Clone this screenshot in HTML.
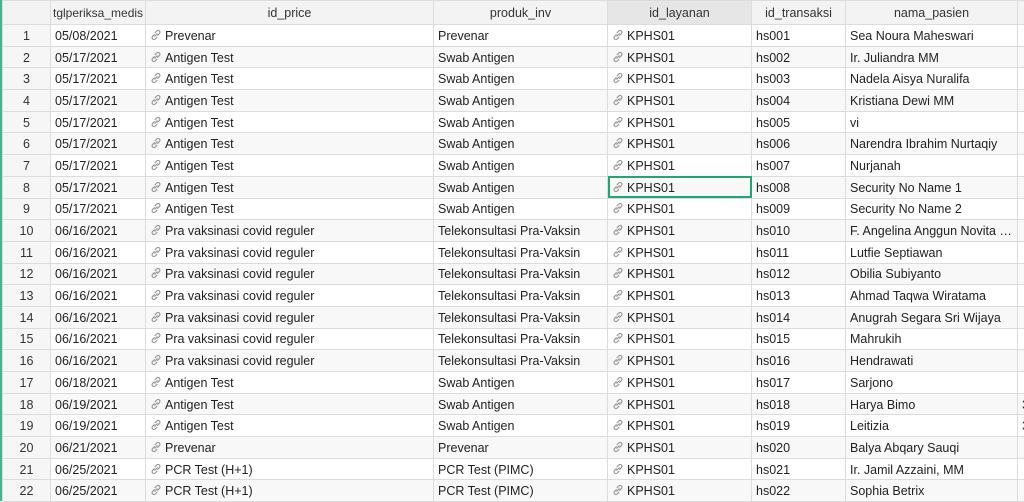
<!DOCTYPE html><html><head><style>
*{margin:0;padding:0;box-sizing:border-box}
body{width:1024px;height:501px;overflow:hidden;background:#fff;font-family:"Liberation Sans",Arial,sans-serif;font-size:12.5px;color:#222;position:relative}
.bar{position:absolute;left:0;top:0;width:2px;height:501px;background:#2fbf8f}
table{position:absolute;left:2px;top:0;border-collapse:collapse;table-layout:fixed;width:1035px}
td,th{border:1px solid #dcdcdc;height:21.7px;padding:1px 4px 0;white-space:nowrap;overflow:hidden;font-weight:normal}
th{height:24px;background:#f3f3f3;color:#333;text-align:center;font-size:12.5px}
th.s{background:#e6e6e6}
td.n{text-align:center;background:#f6f6f6;color:#333}
td.n.s{background:#e6e6e6}
tr.g td{background:#f8f8f8}
tr.g td.n{background:#f6f6f6}
td.sel{outline:2px solid #1fa672;outline-offset:-2px}
svg{width:12px;height:12px;vertical-align:-1px;margin-right:3px}
</style></head><body><div class="bar"></div>
<svg style="display:none"><defs><symbol id="l" viewBox="0 0 12 12"><path d="M4.8 7.2l2.4-2.4M4.3 5.7L2.6 7.4a1.8 1.8 0 0 0 2.6 2.6L6.9 8.3M7.7 6.3l1.7-1.7a1.8 1.8 0 0 0-2.6-2.6L5.1 3.7" fill="none" stroke="#999" stroke-width="1.2" stroke-linecap="round"/></symbol></defs></svg>
<table>
<colgroup><col style="width:48px"><col style="width:95px"><col style="width:288px"><col style="width:174px"><col style="width:144px"><col style="width:94px"><col style="width:172px"><col style="width:20px"></colgroup>
<tr><th></th><th style="text-align:left;padding:0 2px;font-size:12px">tglperiksa_medis</th><th>id_price</th><th>produk_inv</th><th class="s">id_layanan</th><th>id_transaksi</th><th>nama_pasien</th><th></th></tr>
<tr><td class="n">1</td><td>05/08/2021</td><td><svg><use href="#l"/></svg>Prevenar</td><td>Prevenar</td><td><svg><use href="#l"/></svg>KPHS01</td><td>hs001</td><td>Sea Noura Maheswari</td><td></td></tr>
<tr class="g"><td class="n">2</td><td>05/17/2021</td><td><svg><use href="#l"/></svg>Antigen Test</td><td>Swab Antigen</td><td><svg><use href="#l"/></svg>KPHS01</td><td>hs002</td><td>Ir. Juliandra MM</td><td></td></tr>
<tr><td class="n">3</td><td>05/17/2021</td><td><svg><use href="#l"/></svg>Antigen Test</td><td>Swab Antigen</td><td><svg><use href="#l"/></svg>KPHS01</td><td>hs003</td><td>Nadela Aisya Nuralifa</td><td></td></tr>
<tr class="g"><td class="n">4</td><td>05/17/2021</td><td><svg><use href="#l"/></svg>Antigen Test</td><td>Swab Antigen</td><td><svg><use href="#l"/></svg>KPHS01</td><td>hs004</td><td>Kristiana Dewi MM</td><td></td></tr>
<tr><td class="n">5</td><td>05/17/2021</td><td><svg><use href="#l"/></svg>Antigen Test</td><td>Swab Antigen</td><td><svg><use href="#l"/></svg>KPHS01</td><td>hs005</td><td>vi</td><td></td></tr>
<tr class="g"><td class="n">6</td><td>05/17/2021</td><td><svg><use href="#l"/></svg>Antigen Test</td><td>Swab Antigen</td><td><svg><use href="#l"/></svg>KPHS01</td><td>hs006</td><td>Narendra Ibrahim Nurtaqiy</td><td></td></tr>
<tr><td class="n">7</td><td>05/17/2021</td><td><svg><use href="#l"/></svg>Antigen Test</td><td>Swab Antigen</td><td><svg><use href="#l"/></svg>KPHS01</td><td>hs007</td><td>Nurjanah</td><td></td></tr>
<tr class="g"><td class="n s">8</td><td>05/17/2021</td><td><svg><use href="#l"/></svg>Antigen Test</td><td>Swab Antigen</td><td class="sel"><svg><use href="#l"/></svg>KPHS01</td><td>hs008</td><td>Security No Name 1</td><td></td></tr>
<tr><td class="n">9</td><td>05/17/2021</td><td><svg><use href="#l"/></svg>Antigen Test</td><td>Swab Antigen</td><td><svg><use href="#l"/></svg>KPHS01</td><td>hs009</td><td>Security No Name 2</td><td></td></tr>
<tr class="g"><td class="n">10</td><td>06/16/2021</td><td><svg><use href="#l"/></svg>Pra vaksinasi covid reguler</td><td>Telekonsultasi Pra-Vaksin</td><td><svg><use href="#l"/></svg>KPHS01</td><td>hs010</td><td>F. Angelina Anggun Novita …</td><td></td></tr>
<tr><td class="n">11</td><td>06/16/2021</td><td><svg><use href="#l"/></svg>Pra vaksinasi covid reguler</td><td>Telekonsultasi Pra-Vaksin</td><td><svg><use href="#l"/></svg>KPHS01</td><td>hs011</td><td>Lutfie Septiawan</td><td></td></tr>
<tr class="g"><td class="n">12</td><td>06/16/2021</td><td><svg><use href="#l"/></svg>Pra vaksinasi covid reguler</td><td>Telekonsultasi Pra-Vaksin</td><td><svg><use href="#l"/></svg>KPHS01</td><td>hs012</td><td>Obilia Subiyanto</td><td></td></tr>
<tr><td class="n">13</td><td>06/16/2021</td><td><svg><use href="#l"/></svg>Pra vaksinasi covid reguler</td><td>Telekonsultasi Pra-Vaksin</td><td><svg><use href="#l"/></svg>KPHS01</td><td>hs013</td><td>Ahmad Taqwa Wiratama</td><td></td></tr>
<tr class="g"><td class="n">14</td><td>06/16/2021</td><td><svg><use href="#l"/></svg>Pra vaksinasi covid reguler</td><td>Telekonsultasi Pra-Vaksin</td><td><svg><use href="#l"/></svg>KPHS01</td><td>hs014</td><td>Anugrah Segara Sri Wijaya</td><td></td></tr>
<tr><td class="n">15</td><td>06/16/2021</td><td><svg><use href="#l"/></svg>Pra vaksinasi covid reguler</td><td>Telekonsultasi Pra-Vaksin</td><td><svg><use href="#l"/></svg>KPHS01</td><td>hs015</td><td>Mahrukih</td><td></td></tr>
<tr class="g"><td class="n">16</td><td>06/16/2021</td><td><svg><use href="#l"/></svg>Pra vaksinasi covid reguler</td><td>Telekonsultasi Pra-Vaksin</td><td><svg><use href="#l"/></svg>KPHS01</td><td>hs016</td><td>Hendrawati</td><td></td></tr>
<tr><td class="n">17</td><td>06/18/2021</td><td><svg><use href="#l"/></svg>Antigen Test</td><td>Swab Antigen</td><td><svg><use href="#l"/></svg>KPHS01</td><td>hs017</td><td>Sarjono</td><td></td></tr>
<tr class="g"><td class="n">18</td><td>06/19/2021</td><td><svg><use href="#l"/></svg>Antigen Test</td><td>Swab Antigen</td><td><svg><use href="#l"/></svg>KPHS01</td><td>hs018</td><td>Harya Bimo</td><td>3</td></tr>
<tr><td class="n">19</td><td>06/19/2021</td><td><svg><use href="#l"/></svg>Antigen Test</td><td>Swab Antigen</td><td><svg><use href="#l"/></svg>KPHS01</td><td>hs019</td><td>Leitizia</td><td>3</td></tr>
<tr class="g"><td class="n">20</td><td>06/21/2021</td><td><svg><use href="#l"/></svg>Prevenar</td><td>Prevenar</td><td><svg><use href="#l"/></svg>KPHS01</td><td>hs020</td><td>Balya Abqary Sauqi</td><td></td></tr>
<tr><td class="n">21</td><td>06/25/2021</td><td><svg><use href="#l"/></svg>PCR Test (H+1)</td><td>PCR Test (PIMC)</td><td><svg><use href="#l"/></svg>KPHS01</td><td>hs021</td><td>Ir. Jamil Azzaini, MM</td><td></td></tr>
<tr class="g"><td class="n">22</td><td>06/25/2021</td><td><svg><use href="#l"/></svg>PCR Test (H+1)</td><td>PCR Test (PIMC)</td><td><svg><use href="#l"/></svg>KPHS01</td><td>hs022</td><td>Sophia Betrix</td><td></td></tr>
</table></body></html>
